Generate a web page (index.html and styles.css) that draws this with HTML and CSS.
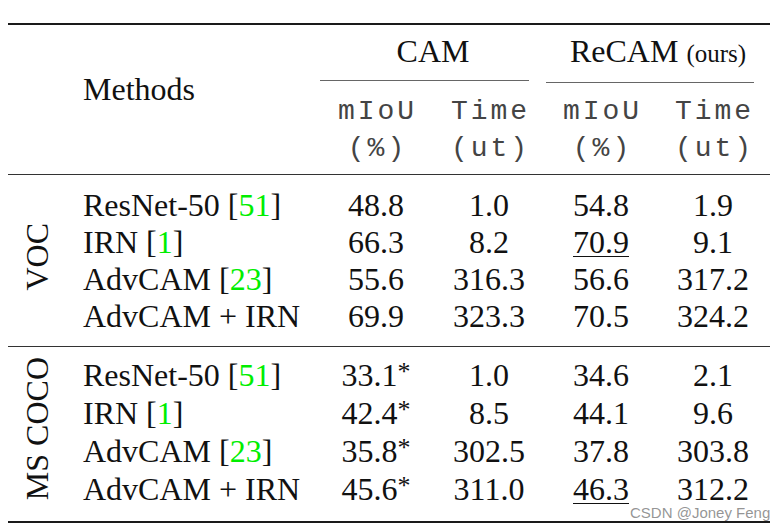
FILE: index.html
```html
<!DOCTYPE html>
<html lang="en">
<head>
    <meta charset="UTF-8">
    <title>CAM vs ReCAM</title>
    <link rel="stylesheet" href="styles.css">
</head>
<body>
    <table class="results">
        <colgroup>
            <col class="col-set">
            <col class="col-method">
            <col class="col-c1">
            <col class="col-c2">
            <col class="col-c3">
            <col class="col-c4">
        </colgroup>
        <thead>
            <tr class="head-top">
                <th rowspan="2" class="corner"></th>
                <th rowspan="2" class="methods">Methods</th>
                <th colspan="2" class="group">
                    <div class="group-name">CAM</div>
                    <div class="cmid cmid-cam"></div>
                </th>
                <th colspan="2" class="group">
                    <div class="group-name">ReCAM <span class="ours">(ours)</span></div>
                    <div class="cmid cmid-recam"></div>
                </th>
            </tr>
            <tr class="head-sub">
                <th><span class="mono">mIoU<br>(%)</span></th>
                <th><span class="mono">Time<br>(ut)</span></th>
                <th><span class="mono">mIoU<br>(%)</span></th>
                <th><span class="mono">Time<br>(ut)</span></th>
            </tr>
        </thead>
        <tbody class="voc">
            <tr>
                <td rowspan="4" class="set"><span class="set-name">VOC</span></td>
                <td class="method">ResNet-50 [<span class="cite">51</span>]</td>
                <td>48.8</td>
                <td>1.0</td>
                <td>54.8</td>
                <td>1.9</td>
            </tr>
            <tr>
                <td class="method">IRN [<span class="cite">1</span>]</td>
                <td>66.3</td>
                <td>8.2</td>
                <td><span class="best">70.9</span></td>
                <td>9.1</td>
            </tr>
            <tr>
                <td class="method">AdvCAM [<span class="cite">23</span>]</td>
                <td>55.6</td>
                <td>316.3</td>
                <td>56.6</td>
                <td>317.2</td>
            </tr>
            <tr>
                <td class="method">AdvCAM + IRN</td>
                <td>69.9</td>
                <td>323.3</td>
                <td>70.5</td>
                <td>324.2</td>
            </tr>
        </tbody>
        <tbody class="coco">
            <tr>
                <td rowspan="4" class="set"><span class="set-name">MS COCO</span></td>
                <td class="method">ResNet-50 [<span class="cite">51</span>]</td>
                <td>33.1<span class="star">*</span></td>
                <td>1.0</td>
                <td>34.6</td>
                <td>2.1</td>
            </tr>
            <tr>
                <td class="method">IRN [<span class="cite">1</span>]</td>
                <td>42.4<span class="star">*</span></td>
                <td>8.5</td>
                <td>44.1</td>
                <td>9.6</td>
            </tr>
            <tr>
                <td class="method">AdvCAM [<span class="cite">23</span>]</td>
                <td>35.8<span class="star">*</span></td>
                <td>302.5</td>
                <td>37.8</td>
                <td>303.8</td>
            </tr>
            <tr>
                <td class="method">AdvCAM + IRN</td>
                <td>45.6<span class="star">*</span></td>
                <td>311.0</td>
                <td><span class="best">46.3</span></td>
                <td>312.2</td>
            </tr>
        </tbody>
    </table>

    <div class="watermark">CSDN @Joney Feng</div>
</body>
</html>
```

FILE: styles.css
```css
* {
    margin: 0;
    padding: 0;
    box-sizing: border-box;
}

body {
    background: #fff;
    color: #111;
    font-family: 'Liberation Serif', 'Times New Roman', serif;
    font-size: 32px;
    position: relative;
    width: 783px;
    height: 531px;
    overflow: hidden;
}

.results {
    margin: 23px 0 0 8px;
    width: 762px;
    table-layout: fixed;
    border-collapse: separate;
    border-spacing: 0;
    border-top: 2px solid #1a1a1a;
    border-bottom: 2px solid #1a1a1a;
}

.col-set { width: 58px; }
.col-method { width: 254px; }
.col-c1 { width: 112px; }
.col-c2 { width: 114px; }
.col-c3 { width: 110px; }
.col-c4 { width: 114px; }

th,
td {
    font-weight: normal;
    line-height: 37px;
    text-align: center;
    white-space: nowrap;
    padding: 0;
}

/* header */

.corner,
.methods {
    vertical-align: top;
    border-bottom: 1px solid #333;
}

.methods {
    text-align: left;
    padding: 46px 0 0 17px;
}

.group {
    padding-top: 8px;
    vertical-align: top;
}

.group-name {
    line-height: 37px;
}

.ours {
    font-size: 25px;
}

.cmid {
    margin-top: 10px;
    border-top: 1px solid #666;
}

.cmid-cam {
    margin-right: 17px;
}

.cmid-recam {
    margin-right: 16px;
}

.head-sub th {
    padding: 10px 0 7px;
    border-bottom: 1px solid #333;
}

.mono {
    display: inline-block;
    font-family: 'Liberation Mono', 'Courier New', monospace;
    font-size: 28px;
    letter-spacing: 3px;
    padding-left: 3px;
    line-height: 37px;
    color: #444;
}

/* body */

.method {
    text-align: left;
    padding-left: 17px;
}

.cite {
    color: #00ee00;
}

.set {
    vertical-align: middle;
}

.set-name {
    display: inline-block;
    writing-mode: vertical-rl;
    transform: rotate(180deg);
    line-height: 37px;
}

.voc tr:first-child td {
    padding-top: 12px;
}

.voc tr:last-child td,
.voc .set {
    padding-bottom: 11px;
    border-bottom: 1px solid #333;
}

.voc .set {
    padding-top: 12px;
}

.coco tr:first-child td {
    padding-top: 10px;
}

.coco tr:last-child td,
.coco .set {
    padding-bottom: 13px;
}

.star {
    font-size: 26px;
    line-height: 0;
    vertical-align: 6px;
}

.best {
    text-decoration: underline;
    text-decoration-thickness: 1px;
    text-underline-offset: 3px;
}

.watermark {
    position: absolute;
    left: 630px;
    top: 505px;
    font-family: 'Liberation Sans', Arial, sans-serif;
    font-size: 15px;
    line-height: 15px;
    color: rgba(130, 130, 130, 0.85);
}
```
